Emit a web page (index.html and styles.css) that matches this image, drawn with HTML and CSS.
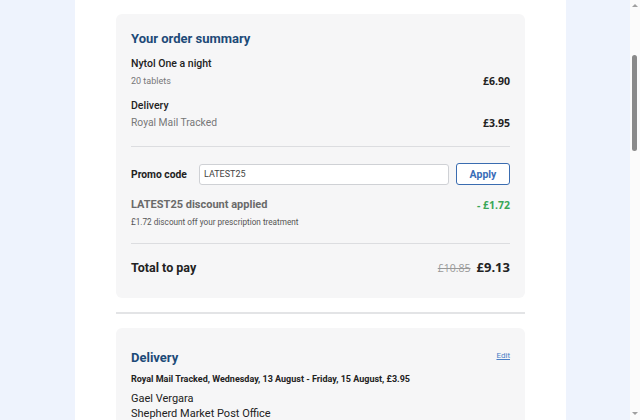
FILE: index.html
```html
<!DOCTYPE html>
<html>
<head>
<meta charset="utf-8">
<link rel="stylesheet" href="styles.css">
</head>
<body>
<div class="page">
  <section class="card summary">
    <h2 class="heading">Your order summary</h2>
    <div class="line-item">
      <div>
        <div class="item-name">Nytol One a night</div>
        <div class="item-sub small">20 tablets</div>
      </div>
      <div class="price">£6.90</div>
    </div>
    <div class="line-item">
      <div>
        <div class="item-name">Delivery</div>
        <div class="item-sub">Royal Mail Tracked</div>
      </div>
      <div class="price">£3.95</div>
    </div>
    <hr class="rule">
    <div class="promo">
      <label class="promo-label">Promo code</label>
      <div class="promo-input">LATEST25</div>
      <button class="apply">Apply</button>
    </div>
    <div class="discount">
      <div>
        <div class="discount-title">LATEST25 discount applied</div>
        <div class="discount-note">£1.72 discount off your prescription treatment</div>
      </div>
      <div class="discount-amount">- £1.72</div>
    </div>
    <hr class="rule">
    <div class="total">
      <div class="total-label">Total to pay</div>
      <div class="total-prices"><span class="old">£10.85</span><span class="new">£9.13</span></div>
    </div>
  </section>
  <div class="divider"></div>
  <section class="card delivery">
    <div class="delivery-head">
      <h2 class="heading">Delivery</h2>
      <a class="edit">Edit</a>
    </div>
    <div class="delivery-method">Royal Mail Tracked, Wednesday, 13 August - Friday, 15 August, £3.95</div>
    <div class="address">Gael Vergara<br>Shepherd Market Post Office</div>
  </section>
</div>
<div class="scrollbar">
  <div class="arrow up"></div>
  <div class="thumb"></div>
  <div class="arrow down"></div>
</div>
</body>
</html>
```
FILE: styles.css
```css
html, body {
  margin: 0;
  padding: 0;
  height: 420px;
  overflow: hidden;
}
body {
  background: #eef3fd;
  font-family: Roboto, "Liberation Sans", sans-serif;
  color: #222;
}
.page {
  margin-left: 75px;
  width: 409px;
  padding: 14px 41px 0;
  background: #fff;
  height: 420px;
}
.card {
  background: #f6f6f7;
  border-radius: 6px;
  padding: 0 15px;
}
.summary {
  padding-top: 16px;
  padding-bottom: 22px;
}
.heading {
  margin: 0;
  font-size: 13px;
  font-weight: 700;
  color: #1d4a78;
  line-height: 18px;
}
.line-item {
  display: flex;
  justify-content: space-between;
  align-items: flex-end;
}
.summary .line-item:first-of-type {
  margin-top: 8px;
}
.line-item + .line-item {
  margin-top: 8px;
}
.item-name {
  font-size: 10.5px;
  font-weight: 500;
  color: #222;
  line-height: 16px;
}
.item-sub {
  font-size: 10.3px;
  color: #777;
  line-height: 18px;
}
.item-sub.small {
  font-size: 9px;
}
.price {
  font-family: "Open Sans", sans-serif;
  font-weight: 700;
  font-size: 10.5px;
  color: #222;
  line-height: 18px;
}
.rule {
  border: 0;
  border-top: 1px solid #dcdde0;
  margin: 14px 0 0;
}
.promo {
  display: flex;
  align-items: center;
  margin-top: 16px;
}
.promo-label {
  font-size: 10.3px;
  font-weight: 700;
  color: #222;
  width: 68px;
}
.promo-input {
  flex: 1;
  height: 19px;
  border: 1px solid #cfd1d5;
  border-radius: 3px;
  background: #fff;
  font-size: 9px;
  color: #444;
  line-height: 19px;
  padding-left: 4px;
}
.apply {
  margin-left: 7px;
  width: 54px;
  height: 22px;
  border: 1.5px solid #3a6cb0;
  border-radius: 3px;
  background: #fff;
  color: #3a6cb8;
  font-family: Roboto, sans-serif;
  font-weight: 700;
  font-size: 10.5px;
  padding: 0;
}
.discount {
  display: flex;
  justify-content: space-between;
  align-items: flex-start;
  margin-top: 12px;
}
.discount-title {
  font-size: 11px;
  font-weight: 700;
  color: #6a6a6a;
  line-height: 16px;
}
.discount-note {
  font-size: 8.2px;
  color: #555;
  line-height: 12px;
  margin-top: 3px;
}
.discount-amount {
  font-family: "Open Sans", sans-serif;
  font-size: 10.5px;
  font-weight: 700;
  color: #3aa757;
  line-height: 16px;
}
.discount + .rule {
  margin-top: 15px;
}
.total {
  display: flex;
  justify-content: space-between;
  align-items: center;
  margin-top: 14px;
}
.total-label {
  font-size: 12.5px;
  font-weight: 700;
  color: #222;
}
.total-prices {
  display: flex;
  align-items: baseline;
  gap: 6px;
}
.old {
  font-family: "Open Sans", sans-serif;
  font-size: 10.5px;
  color: #999;
  text-decoration: line-through;
}
.new {
  font-family: "Open Sans", sans-serif;
  font-size: 13px;
  font-weight: 700;
  color: #222;
}
.divider {
  height: 2px;
  background: #e3e4e6;
  margin: 14px 0 14px;
}
.delivery {
  padding-top: 21px;
  height: 120px;
}
.delivery-head {
  display: flex;
  justify-content: space-between;
  align-items: flex-start;
}
.edit {
  font-size: 8px;
  color: #4a7fc6;
  text-decoration: underline;
  margin-top: 2px;
}
.delivery-method {
  font-size: 9px;
  font-weight: 700;
  color: #222;
  margin-top: 5px;
  line-height: 14px;
}
.address {
  font-size: 11px;
  color: #222;
  line-height: 15px;
  margin-top: 5px;
}
.scrollbar {
  position: fixed;
  top: 0;
  right: 0;
  width: 10px;
  height: 420px;
  background: #fbfbfb;
}
.thumb {
  position: absolute;
  left: 2px;
  top: 55px;
  width: 5px;
  height: 96px;
  border-radius: 3px;
  background: #8a8a8a;
}
.arrow {
  position: absolute;
  left: 2px;
  width: 0;
  height: 0;
  border-left: 3px solid transparent;
  border-right: 3px solid transparent;
}
.arrow.up {
  top: 4px;
  border-bottom: 3px solid #a0a0a0;
}
.arrow.down {
  bottom: 5px;
  border-top: 3px solid #a0a0a0;
}
```
